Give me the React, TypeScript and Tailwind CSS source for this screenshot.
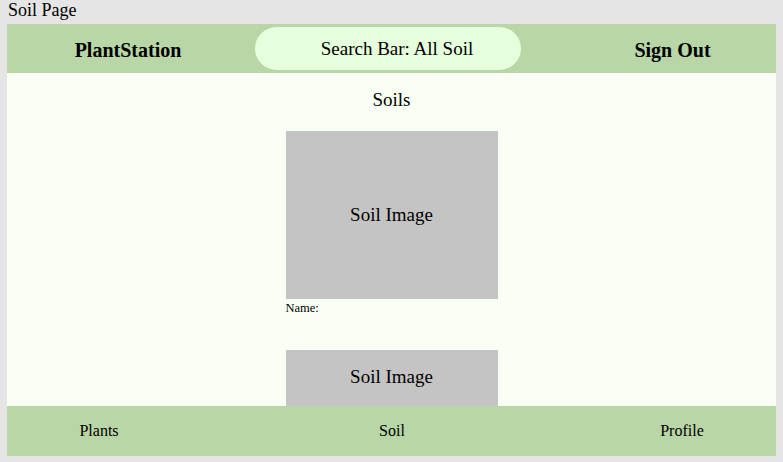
export default function App() {
  return (
    <div className="w-[783px] h-[462px] bg-[#e5e5e5] overflow-hidden font-['Liberation_Serif',serif] text-black">
      <div className="pl-[8px] h-[24px] text-[18px] leading-[20px]">Soil Page</div>
      <div className="ml-[7px] w-[769px] h-[432px] flex flex-col">
        {/* header */}
        <div className="h-[49px] bg-[#b8d6a6] flex items-center">
          <div className="w-[242px] pt-[3px] text-center font-bold text-[20px]">PlantStation</div>
          <div className="ml-[6px] w-[266px] h-[43px] rounded-full bg-[#e6ffdc] flex items-center justify-center pt-[2px] pl-[18px] text-[19px]">
            Search Bar: All Soil
          </div>
          <div className="flex-1 pl-[48px] pt-[3px] text-center font-bold text-[20px]">Sign Out</div>
        </div>

        {/* content */}
        <div className="flex-1 bg-[#f9fff4] overflow-hidden flex flex-col items-center">
          <div className="mt-[15px] text-[19px] leading-[24px]">Soils</div>
          <div className="mt-[19px] w-[212px] flex flex-col">
            <div className="h-[168px] bg-[#c4c4c4] flex items-center justify-center text-[19px]">Soil Image</div>
            <div className="text-[12.5px] leading-[18px]">Name:</div>
          </div>
          <div className="mt-[33px] w-[212px]">
            <div className="h-[168px] bg-[#c4c4c4] flex justify-center pt-[13px] text-[19px]">Soil Image</div>
          </div>
        </div>

        {/* footer */}
        <div className="h-[50px] bg-[#b8d6a6] flex items-center text-[16px]">
          <div className="w-[184px] text-center">Plants</div>
          <div className="w-[402px] text-center">Soil</div>
          <div className="flex-1 pr-[5px] text-center">Profile</div>
        </div>
      </div>
    </div>
  );
}
